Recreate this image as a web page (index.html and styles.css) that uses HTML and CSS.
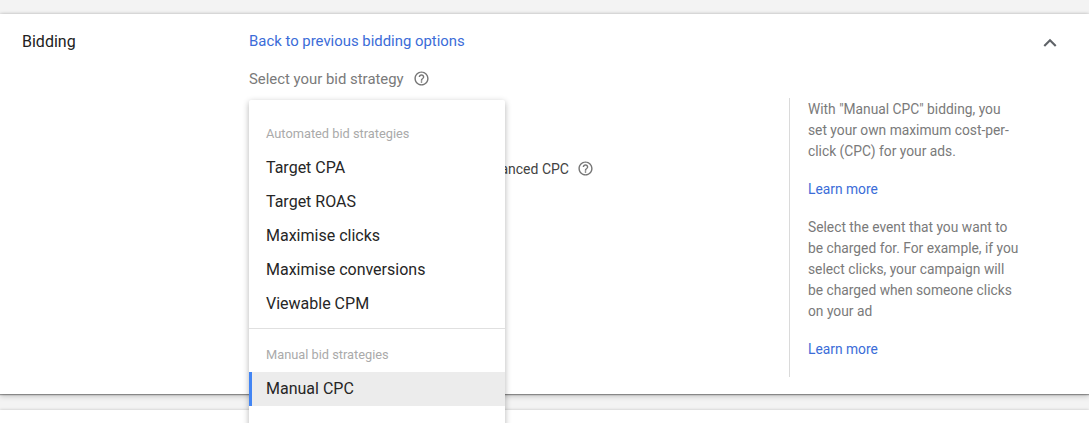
FILE: index.html
```html
<!DOCTYPE html>
<html lang="en">
<head>
<meta charset="utf-8">
<title>Bidding</title>
<link rel="stylesheet" href="styles.css">
</head>
<body>
<div class="card card-prev"></div>
<section class="card card-main">
  <h2 class="section-title">Bidding</h2>
  <div class="section-body">
    <a class="link back-link" href="#">Back to previous bidding options</a>
    <div class="strategy-label">
      <span>Select your bid strategy</span>
      <svg class="help" viewBox="0 0 24 24" aria-hidden="true"><path d="M11 18h2v-2h-2v2zm1-16C6.48 2 2 6.48 2 12s4.48 10 10 10 10-4.48 10-10S17.52 2 12 2zm0 18c-4.41 0-8-3.59-8-8s3.59-8 8-8 8 3.59 8 8-3.59 8-8 8zm0-14c-2.21 0-4 1.79-4 4h2c0-1.1.9-2 2-2s2 .9 2 2c0 2-3 1.75-3 5h2c0-2.25 3-2.5 3-5 0-2.21-1.79-4-4-4z"/></svg>
    </div>
    <div class="columns">
      <div class="options">
        <div class="enhanced">
          <span>Help increase conversions with Enhanced CPC</span>
          <svg class="help" viewBox="0 0 24 24" aria-hidden="true"><path d="M11 18h2v-2h-2v2zm1-16C6.48 2 2 6.48 2 12s4.48 10 10 10 10-4.48 10-10S17.52 2 12 2zm0 18c-4.41 0-8-3.59-8-8s3.59-8 8-8 8 3.59 8 8-3.59 8-8 8zm0-14c-2.21 0-4 1.79-4 4h2c0-1.1.9-2 2-2s2 .9 2 2c0 2-3 1.75-3 5h2c0-2.25 3-2.5 3-5 0-2.21-1.79-4-4-4z"/></svg>
        </div>
      </div>
      <aside class="help-panel">
        <p>With "Manual CPC" bidding, you set your own maximum cost-per-click (CPC) for your ads.</p>
        <a class="link" href="#">Learn more</a>
        <p class="second">Select the event that you want to be charged for. For example, if you select clicks, your campaign will be charged when someone clicks on your ad</p>
        <a class="link" href="#">Learn more</a>
      </aside>
    </div>
  </div>
  <button class="collapse" type="button" aria-label="Collapse">
    <svg viewBox="0 0 24 24" aria-hidden="true"><path d="M7.41 15.41 12 10.83l4.59 4.58L18 14l-6-6-6 6z"/></svg>
  </button>
</section>
<div class="card card-next"></div>
<div class="menu">
  <div class="menu-group">
    <div class="menu-heading">Automated bid strategies</div>
    <div class="menu-item">Target CPA</div>
    <div class="menu-item">Target ROAS</div>
    <div class="menu-item">Maximise clicks</div>
    <div class="menu-item">Maximise conversions</div>
    <div class="menu-item">Viewable CPM</div>
  </div>
  <div class="menu-group manual">
    <div class="menu-heading">Manual bid strategies</div>
    <div class="menu-item selected">Manual CPC</div>
  </div>
</div>
</body>
</html>
```

FILE: styles.css
```css
* { box-sizing: border-box; }
html, body { margin: 0; height: 423px; overflow: hidden; }
body {
  position: relative;
  background: #f3f3f3;
  font-family: Roboto, "Liberation Sans", sans-serif;
  color: #212121;
}
.card { background: #fff; }
.card-prev { height: 0; box-shadow: 0 0 3px rgba(0, 0, 0, .25); }
.card-main {
  display: flex;
  height: 380px;
  margin-top: 14px;
  position: relative;
  box-shadow: 0 0 3px rgba(0, 0, 0, .2), 0 1px 1px rgba(0, 0, 0, .3), 0 2px 6px rgba(0, 0, 0, .2);
}
.card-next { height: 40px; margin-top: 16px; box-shadow: 0 0 3px rgba(0, 0, 0, .2); }
.section-title {
  width: 249px;
  flex: none;
  margin: 0;
  padding: 17px 0 0 22px;
  font-size: 16px;
  line-height: 21px;
  font-weight: 400;
  color: #212121;
}
.section-body { flex: 1; padding-top: 17px; }
.link {
  color: #3b6cd8;
  font-size: 13.8px;
  line-height: 21px;
  text-decoration: none;
}
.back-link { display: block; font-size: 14.9px; }
.strategy-label {
  display: flex;
  align-items: center;
  gap: 9px;
  margin-top: 16px;
  height: 21px;
  font-size: 14.9px;
  color: #7a7a7a;
}
.help { width: 17px; height: 17px; fill: #757575; flex: none; }
.columns { display: flex; margin-top: 9px; }
.options { width: 540px; flex: none; padding-top: 60px; }
.enhanced {
  display: flex;
  align-items: center;
  gap: 8.5px;
  height: 21px;
  padding-left: 31px;
  font-size: 14px;
  color: #424242;
}
.help-panel {
  width: 233px;
  height: 279px;
  padding: 1px 0 0 18px;
  border-left: 1px solid #dadada;
  font-size: 13.8px;
  line-height: 21px;
  color: #7a7a7a;
}
.help-panel p { margin: 0 0 17px; }
.help-panel .link { display: block; margin-bottom: 17px; }
.collapse {
  position: absolute;
  top: 16px;
  right: 26px;
  width: 26px;
  height: 26px;
  padding: 0;
  border: 0;
  background: none;
}
.collapse svg { display: block; width: 26px; height: 26px; fill: #5f6368; }
.menu {
  position: absolute;
  left: 249px;
  top: 100px;
  width: 256px;
  height: 340px;
  background: #fff;
  border-radius: 2px;
  box-shadow: 0 2px 6px rgba(0, 0, 0, .3);
  padding-top: 17px;
}
.menu-group + .menu-group { border-top: 1px solid #e0e0e0; margin-top: 7px; }
.menu-heading {
  height: 34px;
  padding-left: 17px;
  padding-top: 9px;
  font-size: 12.8px;
  line-height: 16px;
  color: #aaa;
}
.manual .menu-heading { height: 43px; padding-top: 18px; }
.menu-item {
  height: 34px;
  padding-left: 17px;
  font-size: 16px;
  line-height: 34px;
  color: #262626;
}
.menu-item.selected {
  background: #ececec;
  border-left: 3px solid #4285f4;
  padding-left: 14px;
}
```
